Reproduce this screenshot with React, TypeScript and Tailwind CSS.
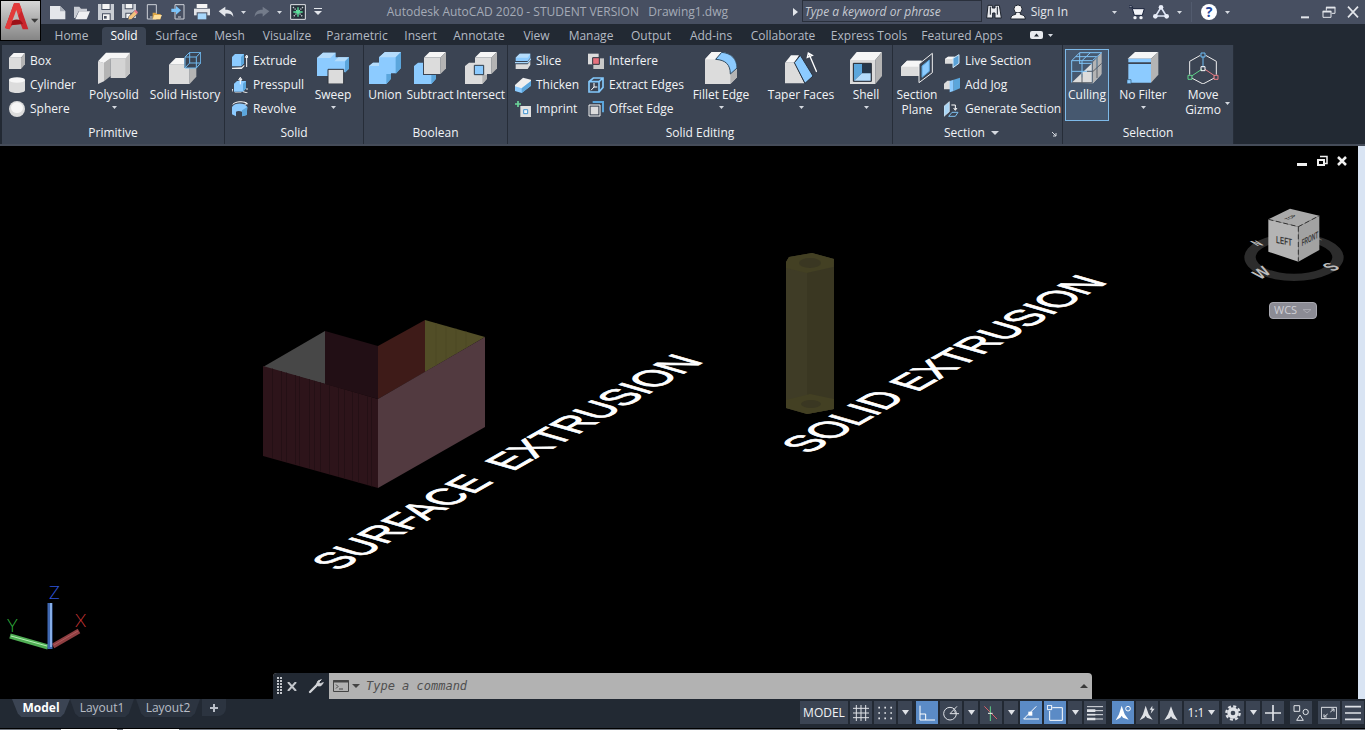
import type { ReactNode } from 'react';

type IconProps = { children: ReactNode };

const WHITE = '#f6f6f6';
const LIGHT = '#dcdcdc';
const SHADE = '#b4b4b4';
const BLUE = '#8ccbff';
const BLUE_TOP = '#b5dcfb';
const BLUE_DARK = '#5ba6dc';
const PANEL = '#3b4453';

function Small({ children }: IconProps) {
  return (
    <svg className="h-4 w-4 shrink-0" viewBox="0 0 48 48" fill="none" aria-hidden="true">
      {children}
    </svg>
  );
}

function Big({ children }: IconProps) {
  return (
    <svg className="h-8 w-8 shrink-0" viewBox="0 0 96 96" fill="none" aria-hidden="true">
      {children}
    </svg>
  );
}

function Caret({ small = false }: { small?: boolean }) {
  return (
    <svg
      className={small ? 'h-[3px] w-[5px] shrink-0' : 'h-1 w-2 shrink-0'}
      viewBox="0 0 8 4"
      preserveAspectRatio="none"
      aria-hidden="true"
    >
      <path d="M0 0h8L4 4z" fill="#d5d9e0" />
    </svg>
  );
}

function Cube({ x, y, s }: { x: number; y: number; s: number }) {
  const d = s / 4;
  return (
    <g transform={`translate(${x} ${y})`}>
      <path d={`M0 ${d}L${d} 0H${s}L${s - d} ${d}z`} fill={WHITE} />
      <path d={`M0 ${d}H${s - d}V${s}H0z`} fill={LIGHT} />
      <path d={`M${s - d} ${d}L${s} 0V${s - d}L${s - d} ${s}z`} fill={SHADE} />
    </g>
  );
}

/* ---------- title bar ---------- */

const quickAccess: { name: string; icon: ReactNode; caret?: boolean }[] = [
  {
    name: 'New',
    icon: (
      <>
        <path d="M0 6h30l16 16v24H0z" fill="#e4e6ea" />
        <path d="M30 6v16h16z" fill="#a9aeb8" />
      </>
    ),
  },
  {
    name: 'Open',
    icon: (
      <>
        <path d="M0 8h16l5 6h18v8H14L4 42H0z" fill="#c9ccd3" />
        <path d="M15 22h33L38 46H4z" fill="#f0f0f2" />
      </>
    ),
  },
  {
    name: 'Save',
    icon: (
      <>
        <path d="M0 0h48v48H0z" fill="#c9cdd4" />
        <path d="M10 0h28v18H10zM12 28h26v20H12z" fill="#474f60" />
        <path d="M13 0h22v15H13zM15 31h20v17H15z" fill="#f4f4f4" />
        <path d="M18 36h8v8h-8z" fill="#474f60" />
      </>
    ),
  },
  {
    name: 'Save As',
    icon: (
      <>
        <path d="M0 0h42v42H0z" fill="#c9cdd4" />
        <path d="M8 0h26v16H8zM10 26h24v16H10z" fill="#474f60" />
        <path d="M11 0h20v13H11zM13 29h12v13H13z" fill="#f4f4f4" />
        <path d="M20 38L38 20l9 9-18 17-11 2z" fill="#f3c27c" stroke="#474f60" strokeWidth="2" />
        <path d="M36 21l5-4 7 8-4 5z" fill="#e9788a" />
      </>
    ),
  },
  {
    name: 'Open from mobile',
    icon: (
      <>
        <path d="M4 2h27v43H4z" stroke="#cdd1d8" strokeWidth="3" />
        <path d="M12 39h8" stroke="#cdd1d8" strokeWidth="3" />
        <path d="M20 26h9l4 4h11v16H20z" fill="#d9a344" />
        <path d="M25 33h23l-6 13H20z" fill="#ffdf9b" />
      </>
    ),
  },
  {
    name: 'Save to mobile',
    icon: (
      <>
        <path d="M15 2h27v43H15z" stroke="#cdd1d8" strokeWidth="3" />
        <path d="M24 39h9" stroke="#cdd1d8" strokeWidth="3" />
        <path d="M4 14h14V6l15 13-15 13v-8H4z" fill="#7cc4fa" />
      </>
    ),
  },
  {
    name: 'Plot',
    icon: (
      <>
        <path d="M8 0h32v12H8z" fill="#f4f4f4" />
        <path d="M0 14h48v20H0z" fill="#e3e5e9" />
        <path d="M8 25h32v23H8z" fill="#474f60" />
        <path d="M11 28h26v18H11z" fill="#a7d7fb" />
      </>
    ),
  },
  {
    name: 'Undo',
    caret: true,
    icon: <path d="M2 22L22 8v9c17 0 24 8 24 22-5-9-12-11-24-10v9z" fill="#e2e5ea" />,
  },
  {
    name: 'Redo',
    caret: true,
    icon: <path d="M46 22L26 8v9C9 17 2 25 2 39c5-9 12-11 24-10v9z" fill="#737b8a" />,
  },
];

function Logo() {
  return (
    <button
      type="button"
      aria-label="Application menu"
      className="flex h-[41px] w-[41px] shrink-0 items-center border border-black bg-linear-to-b from-[#d6d6d6] to-[#858585]"
    >
      <svg className="h-[39px] w-[39px]" viewBox="3 3 117 117" aria-hidden="true">
        <path d="M15 84L42 10h16l27 78H68l-6-16-30 2-4 14z" fill="#c9252c" />
        <path d="M42 10h16l8 20-27 42-11 16-13-4z" fill="#e23a3a" />
        <path d="M49 30l9 30-21 2z" fill="#bdbdbd" />
        <path d="M37 62c14-6 26-4 32 10l-36 4z" fill="#9d1118" />
        <path d="M93 56h22l-11 12z" fill="#3b3b3b" />
      </svg>
    </button>
  );
}

function TitleBar() {
  return (
    <div className="flex h-6 items-center bg-[#474f61] pl-[9px] text-[#e3e6eb]">
      <div className="flex items-center gap-2">
        {quickAccess.map((item) => (
          <div key={item.name} className="flex items-center gap-[7px]">
            <button type="button" aria-label={item.name}>
              <Small>{item.icon}</Small>
            </button>
            {item.caret ? <Caret small /> : null}
          </div>
        ))}
        <button type="button" aria-label="Isolate">
          <Small>
            <path d="M2 2h44v44H2z" fill="#26303a" stroke="#e6e8ec" strokeWidth="3" />
            <path d="M9 9l30 30M39 9L9 39" stroke="#c8ccd2" strokeWidth="4" strokeDasharray="4 3" />
            <path d="M24 10v28M10 24h28" stroke="#5ce29c" strokeWidth="4" />
            <path d="M19 19h10v10H19z" fill="#5ce29c" />
          </Small>
        </button>
        <button type="button" aria-label="Customize Quick Access Toolbar">
          <svg className="h-2 w-2" viewBox="0 0 8 8" aria-hidden="true">
            <path d="M0 0h8v1H0zM0 3h8L4 7z" fill="#e3e6eb" />
          </svg>
        </button>
      </div>
      <h1 className="flex-1 text-center whitespace-pre text-[#a5abb7]">
        {'Autodesk AutoCAD 2020 - STUDENT VERSION   Drawing1.dwg'}
      </h1>
      <svg className="mr-1 h-2 w-[5px]" viewBox="0 0 5 8" aria-hidden="true">
        <path d="M0 0l5 4-5 4z" fill="#e3e6eb" />
      </svg>
      <input
        type="text"
        aria-label="Search"
        placeholder="Type a keyword or phrase"
        className="mb-[2px] h-[22px] w-[180px] border border-[#2a303c] bg-[#474f61] px-[2px] italic placeholder:text-[#c6cad2] placeholder:opacity-100"
      />
      <button type="button" aria-label="Find" className="ml-1">
        <Small>
          <path
            d="M6 4h13v8h8V4h13l6 38H27V27h-7v15H2z"
            fill="#e8eaee"
            stroke="#1c222c"
            strokeWidth="3"
          />
          <path d="M13 8v24M34 8v24" stroke="#1c222c" strokeWidth="3" />
        </Small>
      </button>
      <button type="button" className="ml-2 flex items-center gap-[5px]">
        <Small>
          <circle cx="24" cy="15" r="12" fill="#f4f4f4" stroke="#1c222c" strokeWidth="3" />
          <path d="M2 45c0-10 7-12 15-14v-6h14v6c8 2 15 4 15 14z" fill="#f4f4f4" stroke="#1c222c" strokeWidth="3" />
          <circle cx="24" cy="15" r="10" fill="#f4f4f4" />
        </Small>
        Sign In
      </button>
      <div className="flex items-center pl-11">
        <Caret small />
        <button type="button" aria-label="App Store" className="ml-3">
          <Small>
            <path d="M0 6h9l3 8h34l-6 20H16L9 11H0z" fill="#f2f4f8" stroke="#19233c" strokeWidth="3" />
            <circle cx="18" cy="41" r="5" fill="#f2f4f8" />
            <circle cx="36" cy="41" r="5" fill="#f2f4f8" />
          </Small>
        </button>
        <button type="button" aria-label="Stay connected" className="mx-2">
          <Small>
            <path d="M24 10L8 36h32z" stroke="#dbe3f4" strokeWidth="5" />
            <circle cx="24" cy="10" r="7" fill="#e8edf8" />
            <circle cx="7" cy="37" r="7" fill="#e8edf8" />
            <circle cx="41" cy="37" r="7" fill="#e8edf8" />
          </Small>
        </button>
        <Caret small />
        <span className="mx-[9px] h-5 w-px bg-[#525b6e]" />
        <button
          type="button"
          aria-label="Help"
          className="mr-2 flex h-4 w-4 items-center justify-center rounded-full bg-white text-sm leading-4 font-bold text-[#24479c]"
        >
          ?
        </button>
        <Caret small />
      </div>
      <div className="ml-[67px] flex items-center gap-2 pr-1">
        <button type="button" aria-label="Minimize">
          <Small>
            <path d="M12 37h24v6H12z" fill="#e3e6eb" />
          </Small>
        </button>
        <button type="button" aria-label="Restore">
          <Small>
            <path d="M16 20V10h26v18H32" stroke="#e3e6eb" strokeWidth="3" />
            <path d="M15 11h28M5 23h26" stroke="#e3e6eb" strokeWidth="5" />
            <path d="M6 22h24v18H6z" stroke="#e3e6eb" strokeWidth="3" />
          </Small>
        </button>
        <button type="button" aria-label="Close">
          <Small>
            <path d="M9 8l30 32M39 8L9 40" stroke="#e3e6eb" strokeWidth="5" />
          </Small>
        </button>
      </div>
    </div>
  );
}

const ribbonTabs = [
  { label: 'Home', width: 'w-[53px]' },
  { label: 'Solid', width: 'mx-1 w-[44px]' },
  { label: 'Surface', width: 'w-[53px]' },
  { label: 'Mesh', width: 'w-[53px]' },
  { label: 'Visualize', width: 'w-[62px]' },
  { label: 'Parametric', width: 'w-[78px]' },
  { label: 'Insert', width: 'w-[49px]' },
  { label: 'Annotate', width: 'w-[68px]' },
  { label: 'View', width: 'w-[47px]' },
  { label: 'Manage', width: 'w-[62px]' },
  { label: 'Output', width: 'w-[58px]' },
  { label: 'Add-ins', width: 'w-[62px]' },
  { label: 'Collaborate', width: 'w-[82px]' },
  { label: 'Express Tools', width: 'w-[90px]' },
  { label: 'Featured Apps', width: 'w-[96px]' },
];

function RibbonTabs() {
  return (
    <nav className="flex h-[21px] items-end pl-1">
      {ribbonTabs.map((tab) => (
        <a
          key={tab.label}
          href="#"
          className={`text-center leading-[18px] whitespace-nowrap ${tab.width} ${
            tab.label === 'Solid' ? 'rounded-t-sm bg-[#3b4453] text-white' : 'text-[#b4bac4]'
          }`}
        >
          {tab.label}
        </a>
      ))}
      <button type="button" aria-label="Minimize ribbon" className="ml-5 flex h-5 items-center gap-[5px]">
        <svg className="h-2 w-[13px]" viewBox="0 0 13 8" aria-hidden="true">
          <rect width="13" height="8" rx="2" fill="#e8eaee" />
          <path d="M4 5.500h5L6.500 2.500z" fill="#222933" />
        </svg>
        <Caret small />
      </button>
    </nav>
  );
}

/* ---------- ribbon ---------- */

type Tool = { label: string; icon: ReactNode };

function ToolColumn({ tools, className }: { tools: Tool[]; className: string }) {
  return (
    <div className={`flex flex-col ${className}`}>
      {tools.map((tool) => (
        <button
          key={tool.label}
          type="button"
          className="flex h-6 items-center gap-[5px] whitespace-nowrap"
        >
          <Small>{tool.icon}</Small>
          {tool.label}
        </button>
      ))}
    </div>
  );
}

function BigTool({
  label,
  icon,
  className,
  caret = false,
}: Tool & { className: string; caret?: boolean }) {
  return (
    <button
      type="button"
      className={`flex h-[72px] flex-col items-center border border-transparent pt-[2px] leading-[15px] whitespace-pre ${className}`}
    >
      <Big>{icon}</Big>
      <span className="mt-[3px] mb-1">{label}</span>
      {caret ? <Caret small /> : null}
    </button>
  );
}

function Panel({
  title,
  extra,
  className,
  children,
}: {
  title: string;
  extra?: ReactNode;
  className: string;
  children: ReactNode;
}) {
  return (
    <section className={`flex flex-col border-r border-[#262d38] bg-[#3b4453] pt-1 ${className}`}>
      <div className="flex">{children}</div>
      <div className="flex h-[23px] items-center justify-center">
        <h2>{title}</h2>
        {extra}
      </div>
    </section>
  );
}

const primitiveTools: Tool[] = [
  {
    label: 'Box',
    icon: (
      <>
        <path d="M0 14L14 0h34L36 14z" fill={WHITE} />
        <path d="M0 14h36v34H0z" fill={LIGHT} />
        <path d="M36 14L48 0v34L36 48z" fill={SHADE} />
      </>
    ),
  },
  {
    label: 'Cylinder',
    icon: (
      <>
        <path d="M0 8v32c0 11 48 11 48 0V8z" fill={LIGHT} />
        <ellipse cx="24" cy="9" rx="24" ry="8" fill={WHITE} />
      </>
    ),
  },
  {
    label: 'Sphere',
    icon: (
      <>
        <circle cx="24" cy="24" r="24" fill={LIGHT} />
        <ellipse cx="24" cy="20" rx="18" ry="16" fill={WHITE} />
      </>
    ),
  },
];

const solidTools: Tool[] = [
  {
    label: 'Extrude',
    icon: (
      <>
        <path d="M0 12L9 3h27v28l-9 9H0z" fill={BLUE} />
        <path d="M27 12l9-9v28l-9 9z" fill={BLUE_DARK} />
        <path d="M0 44v4h29l8-8v-5l-8 8z" fill="#eee" />
        <path d="M44 42V10M40 13l4-7 4 7z" stroke="#fff" strokeWidth="3" />
      </>
    ),
  },
  {
    label: 'Presspull',
    icon: (
      <>
        <path d="M6 20l9-8h27v22l-9 10H6z" fill={BLUE} />
        <path d="M33 20l9-8v22l-9 10z" fill={BLUE_DARK} />
        <path d="M25 22V4M20 9l5-8 5 8z" stroke="#fff" strokeWidth="3" />
        <path d="M2 36l-2 8M33 44l14 4M42 36h6M8 48h20" stroke="#e8e8e8" strokeWidth="3" />
      </>
    ),
  },
  {
    label: 'Revolve',
    icon: (
      <>
        <path d="M0 18c8-14 38-14 46 0l-2 24-14 4V32c-6-3-14-3-18 0v14L0 40z" fill={BLUE} />
        <path d="M30 28l16-10-2 24-14 4z" fill={BLUE_DARK} />
        <path d="M2 10C12 0 36 0 46 8M46 8l-8-5M46 8l-8 2" stroke="#fff" strokeWidth="3" />
      </>
    ),
  },
];

const editingTools: Tool[] = [
  {
    label: 'Slice',
    icon: (
      <>
        <path d="M2 14L14 2h32v12l-8 10H2z" fill={BLUE} />
        <path d="M2 14L14 2h32l-8 12z" fill={BLUE_TOP} />
        <path d="M0 29h38l10-12" stroke="#a9d8fb" strokeWidth="4" />
        <path d="M2 34h36l8-10v12l-8 12H2z" fill={LIGHT} />
      </>
    ),
  },
  {
    label: 'Thicken',
    icon: (
      <>
        <path d="M0 24L24 2l24 6v12L22 38 0 34z" fill="#eee" />
        <path d="M0 28l20 6L48 12v14L20 48 0 42z" fill={BLUE} />
        <path d="M20 34l28-22v14L20 48z" fill={BLUE_DARK} />
      </>
    ),
  },
  {
    label: 'Imprint',
    icon: (
      <>
        <path d="M16 15h32v33H16z" fill="#e0e0e0" />
        <path d="M26 26h12v12H26z" fill="#f1f6fb" stroke="#3f93d0" strokeWidth="3" />
        <path d="M9 0v18M0 9h18" stroke="#6cd69b" strokeWidth="5" />
      </>
    ),
  },
];

const editingTools2: Tool[] = [
  {
    label: 'Interfere',
    icon: (
      <>
        <path d="M0 2h32v32H0z" fill={LIGHT} />
        <path d="M16 16h32v32H16z" fill="#c9c9c9" />
        <path d="M14 14h20v20H14z" fill="#e8727e" stroke="#2d333d" strokeWidth="3" />
      </>
    ),
  },
  {
    label: 'Extract Edges',
    icon: (
      <>
        <path
          d="M3 14L16 3h29v28L33 45H3zM3 14h30v31M33 14L45 3"
          stroke="#84c8fb"
          strokeWidth="5"
        />
        <path d="M18 18v12l-9 10M18 30h10" stroke="#fff" strokeWidth="3" />
      </>
    ),
  },
  {
    label: 'Offset Edge',
    icon: (
      <>
        <path d="M14 3h31v31" stroke={BLUE_DARK} strokeWidth="6" />
        <path d="M3 12h33v33H3z" stroke="#f4f4f4" strokeWidth="3" />
        <path d="M8 17h23v23H8z" fill={LIGHT} />
      </>
    ),
  },
];

const sectionTools: Tool[] = [
  {
    label: 'Live Section',
    icon: (
      <>
        <path d="M3 18l9-7h20v14l-6 7H3z" fill={LIGHT} />
        <path d="M3 18l9-7h20l-6 7z" fill={WHITE} />
        <path d="M27 16L45 5v26L27 44z" fill="#5aa2d8" stroke="#cfe6f8" strokeWidth="3" />
      </>
    ),
  },
  {
    label: 'Add Jog',
    icon: (
      <>
        <path d="M0 20l10-9h8v26H0z" fill={LIGHT} />
        <path d="M17 12l12-4v34l-12 4z" fill={BLUE} />
        <path d="M29 8l19-6v32l-19 8z" fill={BLUE_DARK} />
      </>
    ),
  },
  {
    label: 'Generate Section',
    icon: (
      <>
        <path d="M0 16L16 2v30L0 46z" fill="#a9d5f5" stroke="#e2eef7" strokeWidth="2" />
        <path d="M22 12h12v14M29 21l5 7 5-7" stroke="#fff" strokeWidth="3" />
        <path d="M14 46l10-12h18L34 46z" stroke="#7fc1ef" strokeWidth="3" />
      </>
    ),
  },
];

function Ribbon() {
  return (
    <div className="flex overflow-hidden border-b-2 border-[#454c59] pl-[2px] text-[#f1f3f6]">
      <Panel title="Primitive" className="w-[223px]">
        <ToolColumn tools={primitiveTools} className="ml-[7px] w-[77px]" />
        <BigTool
          label="Polysolid"
          caret
          className="w-14"
          icon={
            <>
              <path d="M0 28L24 2h72L88 20H38L18 34z" fill={WHITE} />
              <path d="M0 28l18 4v56L0 96z" fill={LIGHT} />
              <path d="M18 32l20-14v54L18 88z" fill={SHADE} />
              <path d="M38 20h44l14-18v62l-14 14H38z" fill="#d4d4d4" />
              <path d="M82 20L96 2v62L82 78z" fill="#c2c2c2" />
            </>
          }
        />
        <BigTool
          label="Solid History"
          className="ml-[6px] w-[74px]"
          icon={
            <>
              <path d="M0 38l20-20h62L62 38z" fill={WHITE} />
              <path d="M0 38h62v58H0z" fill={LIGHT} />
              <path d="M62 38l20-14v50L62 96z" fill={SHADE} />
              <path d="M46 14h36v34H46z" fill={PANEL} />
              <path
                d="M48 15h34v33H48zM48 15L62 1h33L82 15M95 1v32L82 48M62 1v32h33M62 33L48 48"
                stroke="#6fb8ee"
                strokeWidth="3"
              />
            </>
          }
        />
      </Panel>
      <Panel title="Solid" className="w-[139px]">
        <ToolColumn tools={solidTools} className="ml-[7px] w-20" />
        <BigTool
          label="Sweep"
          caret
          className="w-[42px]"
          icon={
            <>
              <path d="M0 18L18 2h38v14h40v34L78 64H36v8H0z" fill={BLUE} />
              <path d="M0 18L18 2h38L40 18zM52 28l12-12h32L84 28z" fill={BLUE_TOP} />
              <path d="M84 28l12-12v34L84 62z" fill={BLUE_DARK} />
              <path d="M33 52h47v44H33z" fill={LIGHT} stroke="#2d333d" strokeWidth="3" />
            </>
          }
        />
      </Panel>
      <Panel title="Boolean" className="w-36">
        <BigTool
          label="Union"
          className="w-[42px]"
          icon={
            <>
              <path d="M0 42l12-10h18V16L48 0h48v48L80 64H66v16L52 96H0z" fill={BLUE} />
              <path d="M30 16L48 0h48L80 16zM0 42l12-10h18v10z" fill={BLUE_TOP} />
              <path d="M80 16L96 0v48L80 66zM52 66h14v14L52 96z" fill={BLUE_DARK} />
            </>
          }
        />
        <BigTool
          label="Subtract"
          className="w-12"
          icon={
            <>
              <path d="M0 42l12-10h20v34h34v14L52 96H0z" fill={BLUE} />
              <path d="M52 68h14v12L52 96z" fill={BLUE_DARK} />
              <path d="M27 14h56v55H27z" fill={PANEL} />
              <Cube x={30} y={0} s={66} />
            </>
          }
        />
        <BigTool
          label="Intersect"
          className="w-[53px]"
          icon={
            <>
              <path d="M0 42l12-10h20v34h34v14L52 96H0z" fill={LIGHT} />
              <path d="M52 68h14v12L52 96z" fill={SHADE} />
              <Cube x={30} y={0} s={66} />
              <path d="M28 40h28v28H28z" fill={BLUE} stroke="#2d3a48" strokeWidth="3" />
            </>
          }
        />
      </Panel>
      <Panel title="Solid Editing" className="w-[385px]">
        <ToolColumn tools={editingTools} className="ml-[7px] w-[73px]" />
        <ToolColumn tools={editingTools2} className="w-[100px]" />
        <BigTool
          label="Fillet Edge"
          caret
          className="w-[66px]"
          icon={
            <>
              <path d="M0 22L20 0h28c30 2 48 20 48 50v26L76 96H0z" fill={LIGHT} />
              <path d="M0 22L20 0h30L32 22z" fill={WHITE} />
              <path d="M76 64l20-16v28L76 96z" fill={SHADE} />
              <path d="M32 22L50 1c28 2 46 20 46 47L76 66c0-28-14-42-44-44z" fill={BLUE} stroke="#2f4a61" strokeWidth="3" />
            </>
          }
        />
        <BigTool
          label="Taper Faces"
          caret
          className="ml-[14px] w-[66px]"
          icon={
            <>
              <path d="M0 32l18-22h24L28 32z" fill={WHITE} />
              <path d="M0 32h28l30 62H0z" fill={LIGHT} />
              <path d="M28 32l18-22 38 62-24 22z" fill={BLUE} stroke="#28323f" strokeWidth="3" />
              <path d="M95 60L72 6M67 16l3-13 12 7z" stroke="#fff" strokeWidth="4" />
            </>
          }
        />
        <BigTool
          label="Shell"
          caret
          className="ml-3 w-10"
          icon={
            <>
              <path d="M0 24L20 0h76L76 24z" fill={WHITE} />
              <path d="M0 24h76v72H0z" fill={LIGHT} />
              <path d="M76 24L96 0v72L76 96z" fill={SHADE} />
              <path d="M10 34h54v54H10z" fill="#27384b" stroke="#262c36" strokeWidth="3" />
              <path d="M12 36h24v28L12 86z" fill={BLUE_DARK} />
              <path d="M36 64h26v22H12z" fill={BLUE_TOP} />
            </>
          }
        />
      </Panel>
      <Panel
        title="Section"
        className="relative w-[170px]"
        extra={
          <>
            <span className="mr-3 ml-[6px]">
              <Caret />
            </span>
            <svg className="absolute right-[5px] bottom-[7px] h-[5px] w-[5px]" viewBox="0 0 5 5" aria-hidden="true">
              <path d="M0 0l4 4M4 1v3H1" stroke="#d5d9e0" fill="none" />
            </svg>
          </>
        }
      >
        <BigTool
          label={'Section\nPlane'}
          className="w-12"
          icon={
            <>
              <path d="M0 44l18-18h44v46H0z" fill={LIGHT} />
              <path d="M0 44l18-18h44L54 44z" fill={WHITE} />
              <path d="M54 36L94 4v58L54 92z" fill={PANEL} stroke="#f0f0f0" strokeWidth="3" />
              <path d="M63 42l22-18v34L63 76z" fill={BLUE} stroke="#58a2d8" strokeWidth="3" />
            </>
          }
        />
        <ToolColumn tools={sectionTools} className="ml-[3px]" />
      </Panel>
      <Panel title="Selection" className="w-[171px]">
        <BigTool
          label="Culling"
          className="ml-[2px] w-11 border-[#7db9e8]! bg-[#46586f]"
          icon={
            <>
              <path d="M2 92L90 8v60L66 94z" fill={LIGHT} />
              <path d="M66 30L92 2v64L66 94z" fill={SHADE} />
              <path
                d="M2 26h62v66M2 26v66M2 58h62M33 26v50M2 26L26 2h66M64 26L92 2M26 2v34M58 2L33 26M14 14h64v38M26 34h40"
                stroke="#7fc3f7"
                strokeWidth="3"
              />
              <path d="M33 64v30M2 92h62V26M48 58h16M64 60l28-26M78 14v64" stroke="#5a6069" strokeWidth="3" />
            </>
          }
        />
        <BigTool
          label="No Filter"
          caret
          className="ml-[6px] w-14"
          icon={
            <>
              <path d="M2 20L24 0h70L72 20z" fill={WHITE} />
              <path d="M72 20L94 0v68L72 92z" fill={SHADE} />
              <path d="M4 20h68v11H4zM4 36h68v56H4z" fill={BLUE} />
              <path d="M0 83h12v12H0z" fill={BLUE} stroke="#2f5877" strokeWidth="2" />
            </>
          }
        />
        <div className="ml-[10px] flex items-center">
          <BigTool
            label={'Move\nGizmo'}
            className="w-11"
            icon={
              <>
                <path d="M40 10L8 28v40M56 10l32 18v40M14 78l34 18 34-18" stroke="#eee" strokeWidth="3" />
                <path d="M48 14v32" stroke="#6fbcf4" strokeWidth="3" />
                <path d="M44 52L14 72" stroke="#5fd38a" strokeWidth="3" />
                <path d="M54 52l30 20" stroke="#ea7d84" strokeWidth="3" />
                <path d="M42 3h12v12H42z" stroke="#6fbcf4" strokeWidth="3" />
                <path d="M3 70h12v12H3z" stroke="#5fd38a" strokeWidth="3" />
                <path d="M81 70h12v12H81z" stroke="#ea7d84" strokeWidth="3" />
                <path d="M42 44h12v12H42z" stroke="#fff" strokeWidth="3" />
              </>
            }
          />
          <span className="mt-9">
            <Caret small />
          </span>
        </div>
      </Panel>
    </div>
  );
}

/* ---------- drawing area ---------- */

const stripes = [272, 281, 286, 295, 299, 309, 314, 320, 329, 338, 344, 352, 358, 367, 371];

function Scene() {
  return (
    <svg className="absolute inset-0 h-full w-full" aria-label="Model space">
      <g transform="translate(0 -146)">
        <path d="M263 367l62-36v53z" fill="#474747" />
        <path d="M325 331l53 15v53l-53-15z" fill="#220f15" />
        <path d="M378 346l47-26v52l-47 27z" fill="#3e1b18" />
        <path d="M425 320l60 17-60 35z" fill="#524e27" />
        <path d="M263 366l115 33v89l-115-32z" fill="#2d141a" />
        <path d="M378 399l107-62v90l-107 61z" fill="#523a40" />
        {stripes.map((x) => (
          <path
            key={x}
            d={`M${x + 0.5} ${366 + (x - 263) * 0.29}v89`}
            stroke="#241015"
            strokeWidth="1"
          />
        ))}
        {[436, 446, 456, 466].map((x) => (
          <path key={x} d={`M${x} ${320 + (x - 425) * 0.28}V${372 - (x - 425) * 0.58}`} stroke="#4d4924" />
        ))}

        <path d="M786 262l3-5 23-4 22 6v150l-27 5-21-6z" fill="#3f3c26" />
        <path d="M786 262l3-5 23-4 22 6-1 8-26 6-21-5z" fill="#434023" />
        <path d="M807 273l27-6v142l-27 5z" fill="#3a3722" />
        <path d="M786 400l24-6 24 5v10l-27 5-21-6z" fill="#434023" />
        <ellipse cx="810" cy="263" rx="11" ry="5" fill="#3a3722" />
        <ellipse cx="811" cy="404" rx="10" ry="4" fill="#3a3722" />

        <g
          fill="#fff"
          stroke="#fff"
          strokeWidth="1"
          fontFamily="Liberation Sans, sans-serif"
          fontSize="40"
        >
          <text transform="matrix(0.823 -0.471 1.1 0.32 339 571)">{'SURFACE\u00a0\u00a0EXTRUSION'}</text>
          <text transform="matrix(0.823 -0.471 1.1 0.32 809 454)">SOLID EXTRUSION</text>
        </g>
      </g>
    </svg>
  );
}

function ViewCube() {
  return (
    <svg
      className="absolute top-[59px] right-3 h-20 w-[105px]"
      viewBox="60 30 315 240"
      fontFamily="Liberation Sans, sans-serif"
      fontWeight="bold"
      aria-label="View cube"
    >
      <path
        fillRule="evenodd"
        d="M70 187a149 71 0 1 0 298 0a149 71 0 1 0-298 0zM104 187a115 49 0 1 0 230 0a115 49 0 1 0-230 0z"
        fill="#2c2c2c"
      />
      <g fill="#bdbdbd">
        <text transform="matrix(0.8 -0.5 0.9 0.7 118 255)" fontSize="46">W</text>
        <text transform="matrix(0.8 -0.4 1.2 0.6 336 230)" fontSize="44">S</text>
        <text transform="matrix(0.9 -0.1 1 0.6 108 153)" fontSize="34">N</text>
        <text transform="matrix(0.8 0.1 0.7 0.5 290 134)" fontSize="26">E</text>
      </g>
      <path d="M142 73l65-32 88 21-63 33z" fill="#a9a9a9" />
      <path d="M142 73l90 22v105l-90-30z" fill="#b4b4b4" />
      <path d="M232 95l63-33v103l-63 35z" fill="#a2a2a2" />
      <path d="M142 73l90 22 63-33M232 95v105" fill="none" stroke="#333" strokeWidth="3" strokeDasharray="15 8" />
      <g fill="#3a3a3a">
        <text transform="matrix(0.62 0.12 0 1 165 144)" fontSize="31">LEFT</text>
        <text transform="matrix(0.5 -0.26 0 1 242 154)" fontSize="29">FRONT</text>
        <text transform="matrix(0.7 -0.34 0.8 0.25 200 76)" fontSize="20">TOP</text>
      </g>
    </svg>
  );
}

function UcsIcon() {
  return (
    <svg
      className="absolute bottom-10 left-0 h-[80px] w-[95px]"
      viewBox="0 0 95 80"
      fontFamily="Lato, sans-serif"
      fontWeight="300"
      fontSize="18"
      aria-label="UCS icon"
    >
      <path d="M53 67l26-15" stroke="#8f3f42" strokeWidth="5" />
      <path d="M54 66l24-14" stroke="#b05a5c" strokeWidth="1" />
      <path d="M10 57l38 11" stroke="#4fae54" strokeWidth="5" />
      <path d="M11 57l36 10" stroke="#b5f0b5" strokeWidth="1" />
      <path d="M50 24v46" stroke="#3f67b0" strokeWidth="5" />
      <path d="M51 24v44" stroke="#86aee8" strokeWidth="2" />
      <text x="49" y="20" fill="#2f55d8">Z</text>
      <text x="7" y="53" fill="#2fae3c">Y</text>
      <text x="75" y="48" fill="#c53333">X</text>
    </svg>
  );
}

function CommandLine() {
  return (
    <div className="absolute bottom-0 left-[20.1%] flex h-[26px] w-[60.3%] overflow-hidden rounded-t-sm bg-[#b2b2b2]">
      <div className="flex w-14 shrink-0 items-center gap-2 bg-[#222933] pl-1">
        <svg className="h-[18px] w-[5px]" viewBox="0 0 5 18" aria-hidden="true">
          <path d="M1 0v18M4 0v18" stroke="#c3c6cb" strokeWidth="2" strokeDasharray="2 1" />
        </svg>
        <button type="button" aria-label="Close command line" className="-ml-[3px]">
          <svg className="h-[9px] w-[10px]" viewBox="0 0 10 9" aria-hidden="true">
            <path d="M1 0l8 9M9 0L1 9" stroke="#c3c6cb" strokeWidth="2" />
          </svg>
        </button>
        <button type="button" aria-label="Customize" className="ml-[3px]">
          <Small>
            <path d="M6 42l22-22" stroke="#d2d4d8" strokeWidth="7" strokeLinecap="round" />
            <path d="M40 5L30 9l-4 9 5 6 8-1 7-9-9 3-5-4z" fill="#d2d4d8" stroke="#d2d4d8" strokeWidth="3" />
          </Small>
        </button>
      </div>
      <button type="button" aria-label="Recent commands" className="ml-1 flex items-center gap-[3px]">
        <svg className="h-3 w-4" viewBox="0 0 16 12" fill="none" aria-hidden="true">
          <path d="M.5.5h15v11H.5z" stroke="#444" />
          <path d="M0 1.500h16" stroke="#444" strokeWidth="2" />
          <path d="M3 4.500l2 2-2 2M6 9h4" stroke="#444" />
        </svg>
        <svg className="h-1 w-2" viewBox="0 0 8 4" aria-hidden="true">
          <path d="M0 0h8L4 4z" fill="#444" />
        </svg>
      </button>
      <input
        type="text"
        aria-label="Command"
        placeholder="Type a command"
        className="ml-[6px] min-w-0 flex-1 bg-transparent font-['DejaVu_Sans_Mono',monospace] text-xs italic placeholder:text-[#4f4f4f] placeholder:opacity-100"
      />
      <button type="button" aria-label="Command history" className="mr-1">
        <svg className="h-1 w-2" viewBox="0 0 8 4" aria-hidden="true">
          <path d="M0 4h8L4 0z" fill="#3a3a3a" />
        </svg>
      </button>
    </div>
  );
}

function Viewport() {
  return (
    <main className="relative min-h-[480px] flex-1 overflow-hidden border-r-[7px] border-[#d9e4f3] bg-black">
      <Scene />
      <div className="absolute top-[9px] right-[10px] flex items-center gap-2">
        <button type="button" aria-label="Minimize drawing">
          <svg className="h-3 w-3" viewBox="0 0 12 12" aria-hidden="true">
            <path d="M1 8h10v3H1z" fill="#f0f0f0" />
          </svg>
        </button>
        <button type="button" aria-label="Restore drawing">
          <svg className="h-3 w-3" viewBox="0 0 12 12" fill="none" aria-hidden="true">
            <path d="M4 1.500h7v7H9" stroke="#f0f0f0" strokeWidth="1.500" />
            <path d="M2 5h6v5H2z" stroke="#f0f0f0" strokeWidth="2" />
          </svg>
        </button>
        <button type="button" aria-label="Close drawing">
          <svg className="h-3 w-3" viewBox="0 0 12 12" aria-hidden="true">
            <path d="M2 2l8 8M10 2l-8 8" stroke="#f0f0f0" strokeWidth="2.500" />
          </svg>
        </button>
      </div>
      <ViewCube />
      <button
        type="button"
        className="absolute top-[156px] right-[41px] flex h-[17px] w-12 items-center gap-[6px] rounded-sm border border-[#a9a9b1] bg-[#8b8b94] pl-1 text-[11px] text-[#d0d0d6]"
      >
        WCS
        <svg className="h-1 w-2" viewBox="0 0 8 4" aria-hidden="true">
          <path d="M0 .5h8L4 4z" fill="none" stroke="#a9a9b1" />
        </svg>
      </button>
      <UcsIcon />
      <CommandLine />
    </main>
  );
}

/* ---------- status bar ---------- */

const layoutTabs = ['Model', 'Layout1', 'Layout2'];

function StatusButton({
  label,
  active = false,
  children,
}: {
  label: string;
  active?: boolean;
  children: ReactNode;
}) {
  return (
    <button
      type="button"
      aria-label={label}
      className={
        active
          ? 'flex h-[23px] w-[22px] items-center justify-center bg-[#5b8bc6]'
          : 'flex h-[23px] w-[22px] items-center justify-center bg-[#3b4453]'
      }
    >
      {children}
    </button>
  );
}

function StatusCaret({ label }: { label: string }) {
  return (
    <button type="button" aria-label={label} className="flex h-[23px] w-[14px] items-center justify-center bg-[#3b4453]">
      <svg className="h-[5px] w-[7px]" viewBox="0 0 7 5" aria-hidden="true">
        <path d="M0 0h7L3.500 5z" fill="#dfe2e7" />
      </svg>
    </button>
  );
}

function StatusBar() {
  return (
    <footer className="flex h-[29px] bg-[#222933]">
      <div className="flex items-start pl-3">
        {layoutTabs.map((tab) => (
          <a
            key={tab}
            href="#"
            className={
              tab === 'Model'
                ? 'w-[58px] bg-[#3b4453] text-center leading-[18px] font-bold text-white [clip-path:polygon(0_0,100%_0,90%_80%,84%_100%,16%_100%,10%_80%)]'
                : 'mr-[2px] w-16 bg-[#2c3440] text-center leading-[18px] text-[#b9bec7] [clip-path:polygon(0_0,100%_0,92%_80%,86%_100%,14%_100%,8%_80%)]'
            }
          >
            {tab}
          </a>
        ))}
        <button
          type="button"
          aria-label="New layout"
          className="flex h-[17px] w-6 items-center justify-center rounded-br-lg bg-[#2c3440]"
        >
          <svg className="h-2 w-2" viewBox="0 0 8 8" aria-hidden="true">
            <path d="M4 0v8M0 4h8" stroke="#b9bec7" strokeWidth="2" />
          </svg>
        </button>
      </div>
      <div className="mt-[2px] ml-auto flex items-start gap-[2px] pr-px text-[#f1f3f6]">
        <button type="button" className="h-[23px] w-12 bg-[#3b4453] text-center">
          MODEL
        </button>
        <StatusButton label="Grid">
          <Small>
            <path d="M10 0v48M24 0v48M38 0v48M0 10h48M0 24h48M0 38h48" stroke="#dfe2e7" strokeWidth="3" />
          </Small>
        </StatusButton>
        <StatusButton label="Snap">
          <Small>
            <path
              d="M4 8h42M4 24h42M4 40h42"
              stroke="#dfe2e7"
              strokeWidth="5"
              strokeDasharray="5 13"
            />
          </Small>
        </StatusButton>
        <div className="mr-[2px]">
          <StatusCaret label="Snap settings" />
        </div>
        <StatusButton label="Ortho" active>
          <Small>
            <path d="M3 2v43h45M3 27h17v18" stroke="#fff" strokeWidth="3" />
          </Small>
        </StatusButton>
        <StatusButton label="Polar tracking">
          <Small>
            <circle cx="21" cy="26" r="19" stroke="#dfe2e7" strokeWidth="3" />
            <path d="M21 26h27M21 26L42 4M32 15c4 4 5 7 5 11" stroke="#dfe2e7" strokeWidth="3" />
          </Small>
        </StatusButton>
        <StatusCaret label="Polar settings" />
        <StatusButton label="Isodraft">
          <Small>
            <path d="M4 4l38 38" stroke="#d9606a" strokeWidth="3" />
            <path d="M22 4v44" stroke="#5fd38a" strokeWidth="3" />
            <path d="M15 25h14" stroke="#eee" strokeWidth="3" />
          </Small>
        </StatusButton>
        <StatusCaret label="Isodraft settings" />
        <StatusButton label="Object snap tracking" active>
          <Small>
            <path d="M40 4L2 42h46" stroke="#fff" strokeWidth="3" />
            <path d="M16 20h12v12H16z" fill="#fff" />
          </Small>
        </StatusButton>
        <StatusButton label="Object snap" active>
          <Small>
            <path d="M16 8h30v38H8V18" stroke="#fff" strokeWidth="3" />
            <path d="M1 1h13v13H1z" stroke="#fff" strokeWidth="3" />
          </Small>
        </StatusButton>
        <StatusCaret label="Object snap settings" />
        <div className="mr-1">
          <StatusButton label="Lineweight">
            <Small>
              <path d="M0 5h48M0 17h48M0 29h48M0 42h48" stroke="#dfe2e7" strokeWidth="3" />
              <path d="M0 17h25M0 42h25" stroke="#dfe2e7" strokeWidth="8" />
              <path d="M0 29h25" stroke="#dfe2e7" strokeWidth="5" />
            </Small>
          </StatusButton>
        </div>
        <StatusButton label="Annotation visibility" active>
          <Small>
            <path d="M20 2l9 26 12 16-17-6-4-6-4 6-14 8 10-18z" fill="#fff" />
            <circle cx="39" cy="11" r="7" stroke="#fff" strokeWidth="3" />
          </Small>
        </StatusButton>
        <StatusButton label="Auto scale">
          <Small>
            <path d="M20 2l9 26 12 16-17-6-4-6-4 6-14 8 10-18z" fill="#dfe2e7" />
            <path d="M40 2l-8 12h6l-3 12 12-15h-7z" fill="#dfe2e7" />
          </Small>
        </StatusButton>
        <StatusButton label="Annotation">
          <Small>
            <path d="M24 4l9 24 11 18-16-6-4-6-4 6-16 6 11-18z" fill="#dfe2e7" />
          </Small>
        </StatusButton>
        <button type="button" className="mr-px flex h-[23px] w-[35px] items-center justify-center gap-1 bg-[#3b4453]">
          1:1
          <svg className="h-[5px] w-[7px]" viewBox="0 0 7 5" aria-hidden="true">
            <path d="M0 0h7L3.500 5z" fill="#dfe2e7" />
          </svg>
        </button>
        <StatusButton label="Workspace">
          <Small>
            <circle cx="24" cy="24" r="12" stroke="#dfe2e7" strokeWidth="10" />
            <circle cx="24" cy="24" r="20" stroke="#dfe2e7" strokeWidth="7" strokeDasharray="9 6.700" />
          </Small>
        </StatusButton>
        <StatusCaret label="Workspace list" />
        <StatusButton label="Annotation monitor">
          <Small>
            <path d="M24 0v48M0 24h48" stroke="#dfe2e7" strokeWidth="5" />
          </Small>
        </StatusButton>
        <div className="mx-1">
          <StatusButton label="Isolate objects">
            <Small>
              <path d="M3 2h17v17H3zM21 30l10 16H11z" stroke="#dfe2e7" strokeWidth="3" />
              <circle cx="38" cy="21" r="8" stroke="#dfe2e7" strokeWidth="3" />
            </Small>
          </StatusButton>
        </div>
        <StatusButton label="Clean screen">
          <Small>
            <path d="M1 7h46v34H1z" stroke="#dfe2e7" strokeWidth="3" />
            <path d="M28 21l10-8M31 12h8v8M20 27l-10 8M17 36H9v-8" stroke="#dfe2e7" strokeWidth="3" />
          </Small>
        </StatusButton>
        <StatusButton label="Customization">
          <Small>
            <path d="M0 5h48M0 24h48M0 43h48" stroke="#dfe2e7" strokeWidth="5" />
          </Small>
        </StatusButton>
      </div>
    </footer>
  );
}

export default function App() {
  return (
    <div className="flex min-h-screen flex-col bg-[#222933] font-['Open_Sans','Noto_Sans',sans-serif] text-xs">
      <header>
        <div className="flex">
          <Logo />
          <div className="min-w-0 flex-1">
            <TitleBar />
            <RibbonTabs />
          </div>
        </div>
        <Ribbon />
      </header>
      <Viewport />
      <StatusBar />
      <div className="flex h-[2px] border-t border-black bg-[#70757e] pl-[61px]">
        <span className="mr-[6px] w-14 bg-white" />
        <span className="w-14 bg-white" />
      </div>
    </div>
  );
}
